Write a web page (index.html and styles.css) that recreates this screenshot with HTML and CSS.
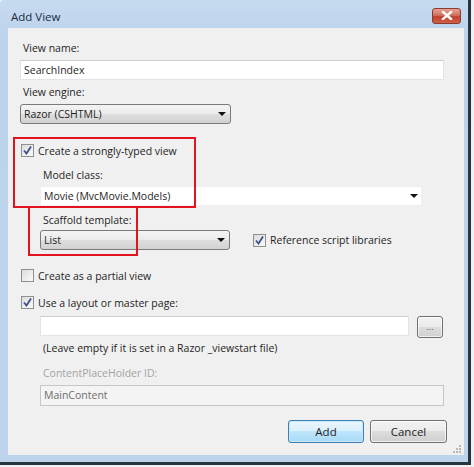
FILE: index.html
```html
<!DOCTYPE html>
<html>
<head>
<meta charset="utf-8">
<title>Add View</title>
<link rel="stylesheet" href="styles.css">
</head>
<body>
<div class="window">
  <div class="titlebar">
    <span class="title">Add View</span>
    <div class="close"><svg width="12" height="9" viewBox="0 0 12 9"><path d="M2 1 L10 8 M10 1 L2 8" stroke="#fff" stroke-width="2.4" stroke-linecap="square"/></svg></div>
  </div>
  <div class="panel">
    <div class="label">View name:</div>
    <div class="input w-name">SearchIndex</div>
    <div class="label m5">View engine:</div>
    <div class="select w-engine"><span>Razor (CSHTML)</span><span class="arrow"></span></div>

    <div class="check-row m19"><span class="cb"><svg width="11" height="11" viewBox="0 0 11 11"><path d="M2 5.5 L4.5 8.5 L9 1.5" fill="none" stroke="#3b4f8a" stroke-width="1.8"/></svg></span>Create a strongly-typed view</div>
    <div class="indent">
      <div class="label m10">Model class:</div>
      <div class="combo w-model"><span>Movie (MvcMovie.Models)</span><span class="arrow"></span></div>
      <div class="label m7">Scaffold template:</div>
      <div class="row-list">
        <div class="select w-list"><span>List</span><span class="arrow"></span></div>
        <div class="check-row"><span class="cb"><svg width="11" height="11" viewBox="0 0 11 11"><path d="M2 5.5 L4.5 8.5 L9 1.5" fill="none" stroke="#3b4f8a" stroke-width="1.8"/></svg></span>Reference script libraries</div>
      </div>
    </div>

    <div class="check-row m18"><span class="cb"></span>Create as a partial view</div>
    <div class="check-row m12"><span class="cb"><svg width="11" height="11" viewBox="0 0 11 11"><path d="M2 5.5 L4.5 8.5 L9 1.5" fill="none" stroke="#3b4f8a" stroke-width="1.8"/></svg></span>Use a layout or master page:</div>
    <div class="indent">
      <div class="row-layout">
        <div class="input w-layout"></div>
        <div class="btn small">...</div>
      </div>
      <div class="label m3">(Leave empty if it is set in a Razor _viewstart file)</div>
      <div class="label m10 disabled">ContentPlaceHolder ID:</div>
      <div class="input dis w-main">MainContent</div>
    </div>

    <div class="buttons">
      <div class="btn default">Add</div>
      <div class="btn">Cancel</div>
    </div>

    <div class="grip"><svg width="10" height="10" viewBox="0 0 10 10" fill="#b8b8b8"><rect x="7" y="1" width="2" height="2"/><rect x="4" y="4" width="2" height="2"/><rect x="7" y="4" width="2" height="2"/><rect x="1" y="7" width="2" height="2"/><rect x="4" y="7" width="2" height="2"/><rect x="7" y="7" width="2" height="2"/></svg></div>

    <div class="annot a1"></div>
    <div class="annot a2"></div>
  </div>
</div>
</body>
</html>
```
FILE: styles.css
```css
html, body {
  margin: 0;
  padding: 0;
}
body {
  background: #eef0f2;
  font-family: "Open Sans", "Noto Sans", "DejaVu Sans", sans-serif;
  font-size: 10.5px;
  color: #1e1e1e;
}
.window {
  width: 468px;
  height: 462px;
  background: linear-gradient(#c6daef, #bcd3ec 40px, #bdd4ec);
  border-right: 3px solid #263640;
  border-bottom: 3px solid #263640;
  border-top-left-radius: 4px;
  position: relative;
}
.titlebar {
  height: 28px;
  box-sizing: border-box;
  display: flex;
  align-items: center;
  justify-content: space-between;
  padding: 3px 7px 0 11px;
}
.title {
  font-size: 11.5px;
  color: #1b2b44;
  margin-top: 1px;
}
.close {
  width: 29px;
  height: 16px;
  box-sizing: border-box;
  border: 1px solid #8a3a2e;
  border-radius: 3px;
  background: linear-gradient(#e6a192, #d2705f 45%, #c0402e 55%, #d0604a);
  display: flex;
  align-items: center;
  justify-content: center;
}
.panel {
  position: relative;
  margin-left: 8px;
  width: 456px;
  height: 427px;
  box-sizing: border-box;
  background: #f0f0f0;
  padding: 13px 0 0 12px;
}
.label {
  height: 15px;
  line-height: 15px;
  padding-left: 3px;
  margin-bottom: 4px;
  white-space: nowrap;
}
.m3 { margin-top: 3px; }
.m5 { margin-top: 5px; }
.m7 { margin-top: 7px; margin-bottom: 2px; }
.m10 { margin-top: 10px; margin-bottom: 3px; }
.m12 { margin-top: 12px; }
.m18 { margin-top: 18px; }
.m19 { margin-top: 19px; }
.disabled { color: #a3a3a3; margin-bottom: 4px; }

.input {
  height: 20px;
  box-sizing: border-box;
  border: 1px solid #e2e4e8;
  border-top-color: #c9ccd2;
  background: #fff;
  padding-left: 3px;
  line-height: 18px;
  white-space: nowrap;
}
.w-name { width: 424px; }
.w-layout { width: 369px; }
.w-main { width: 404px; height: 21px; line-height: 19px; }
.input.dis {
  background: #f4f4f4;
  border-color: #c6c6c6;
  color: #6d6d6d;
}

.select {
  height: 20px;
  box-sizing: border-box;
  border: 1px solid #7a7a7a;
  border-radius: 3px;
  background: linear-gradient(#f3f3f3, #ebebeb 50%, #dedede 50%, #d2d2d2);
  display: flex;
  align-items: center;
  justify-content: space-between;
  padding: 0 4px 0 3px;
}
.w-engine { width: 211px; }
.w-list { width: 190px; }
.combo {
  height: 20px;
  box-sizing: border-box;
  border: 1px solid #eef0f3;
  background: #fff;
  display: flex;
  align-items: center;
  justify-content: space-between;
  padding: 0 3px 0 3px;
}
.w-model { width: 382px; }
.arrow {
  width: 0;
  height: 0;
  border-left: 4px solid transparent;
  border-right: 4px solid transparent;
  border-top: 4px solid #111;
}

.check-row {
  height: 15px;
  display: flex;
  align-items: center;
  gap: 4px;
  padding-left: 1px;
  white-space: nowrap;
}
.cb {
  width: 13px;
  height: 13px;
  box-sizing: border-box;
  border: 1px solid #8e8f8f;
  background: linear-gradient(135deg, #dcdcdc, #fafafa);
  display: flex;
  align-items: center;
  justify-content: center;
}
.indent {
  margin-left: 20px;
}
.row-list {
  display: flex;
  align-items: center;
  gap: 22px;
  height: 20px;
}
.row-layout {
  margin-top: 6px;
  display: flex;
  align-items: flex-start;
  gap: 8px;
  height: 22px;
}
.btn {
  height: 23px;
  width: 77px;
  box-sizing: border-box;
  border: 1px solid #707070;
  border-radius: 3px;
  background: linear-gradient(#f2f2f2, #ebebeb 50%, #dddddd 50%, #cfcfcf);
  display: flex;
  align-items: center;
  justify-content: center;
  font-size: 11.5px;
  box-shadow: inset 0 0 0 1px rgba(255,255,255,0.7);
}
.btn.small {
  width: 26px;
  height: 22px;
  font-size: 9px;
  color: #555;
  padding-bottom: 2px;
}
.btn.default {
  width: 76px;
  border-color: #3c7fb1;
  background: linear-gradient(#eaf6fd, #d9f0fc 50%, #bee6fd 50%, #a7d9f5);
  box-shadow: inset 0 0 0 1px #c9e9fb;
}
.buttons {
  margin-top: 14px;
  display: flex;
  justify-content: flex-end;
  gap: 6px;
  padding-right: 17px;
}
.grip {
  position: absolute;
  right: 2px;
  bottom: 1px;
  width: 10px;
  height: 10px;
  display: flex;
}
.annot {
  position: absolute;
  border: 2px solid #e3141f;
  box-sizing: border-box;
}
.a1 {
  left: 5px;
  top: 109px;
  width: 183px;
  height: 71px;
}
.a2 {
  left: 20px;
  top: 178px;
  width: 110px;
  height: 50px;
}
```
